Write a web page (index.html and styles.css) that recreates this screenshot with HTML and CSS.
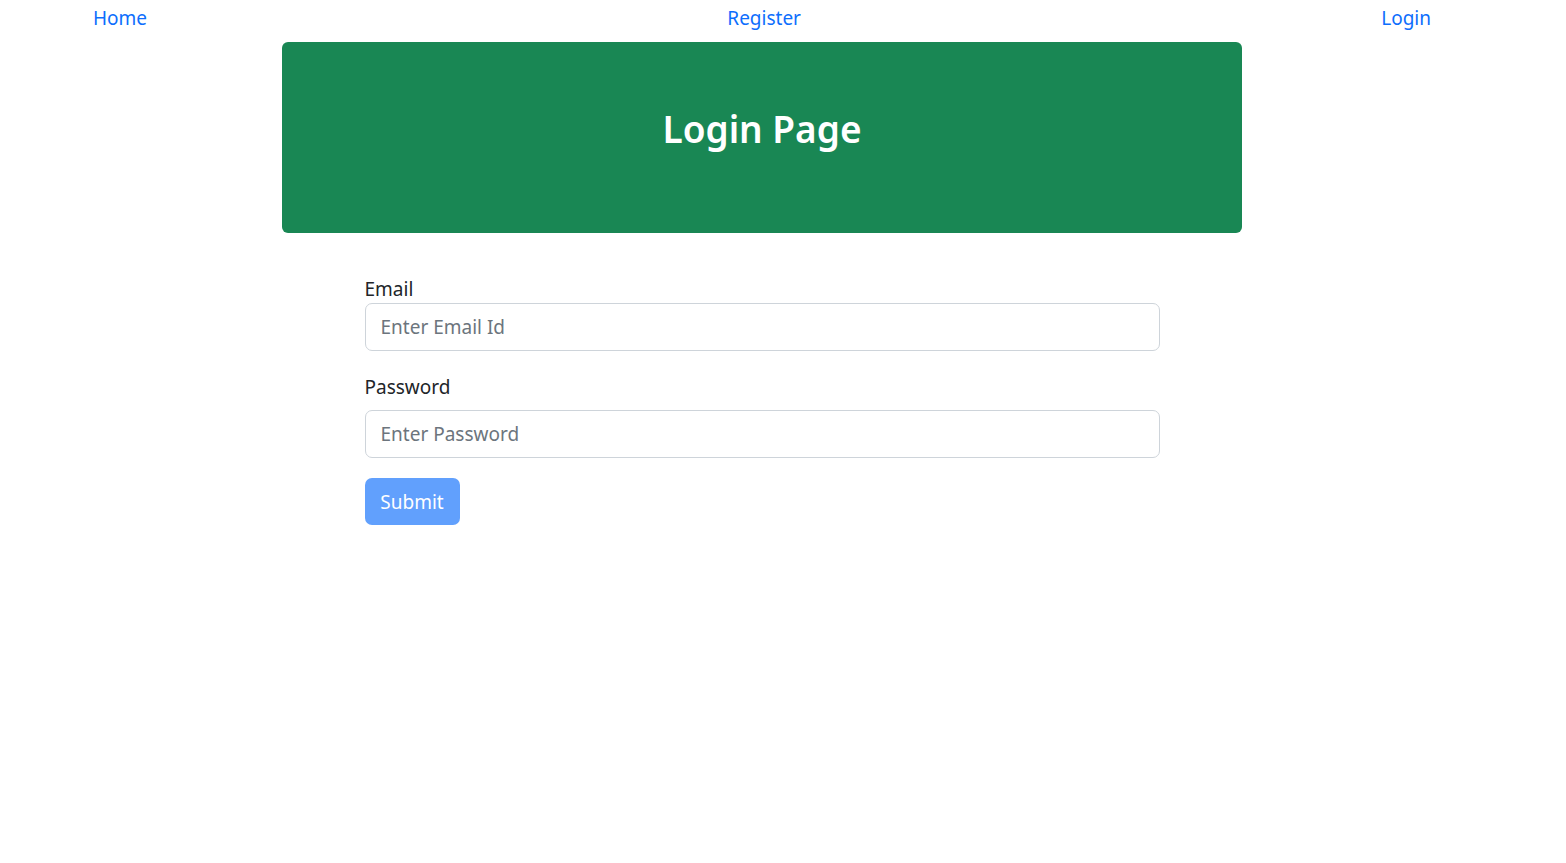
FILE: index.html
```html
<!DOCTYPE html>
<html lang="en">
<head>
    <meta charset="UTF-8">
    <meta name="viewport" content="width=device-width, initial-scale=1.0">
    <title>Login Page</title>
    <link rel="stylesheet" href="styles.css">
</head>
<body>
    <div class="page">
        <!-- top nav -->
        <nav class="top-nav">
            <a href="#" class="nav-link">Home</a>
            <a href="#" class="nav-link">Register</a>
            <a href="#" class="nav-link">Login</a>
        </nav>

        <!-- banner -->
        <div class="banner">
            <h1 class="banner-title">Login Page</h1>
        </div>

        <!-- login form -->
        <form class="login-form">
            <label class="form-label" for="email">Email</label>
            <input type="email" class="form-input" id="email" placeholder="Enter Email Id">

            <label class="form-label password-label" for="password">Password</label>
            <input type="password" class="form-input" id="password" placeholder="Enter Password">

            <button type="submit" class="submit-btn" disabled>Submit</button>
        </form>
    </div>
</body>
</html>
```

FILE: styles.css
```css
* {
    margin: 0;
    padding: 0;
    box-sizing: border-box;
}

body {
    font-family: "Noto Sans", "Open Sans", sans-serif;
    color: #212529;
    background: #fff;
}

.page {
    width: 1524px;
}

.top-nav {
    height: 36px;
    padding: 0 93px;
    display: flex;
    align-items: center;
    justify-content: space-between;
}

.nav-link {
    color: #0d6efd;
    font-size: 19px;
    text-decoration: none;
}

.banner {
    width: 960px;
    height: 191px;
    margin: 6px auto 0;
    padding-top: 63px;
    background: #198754;
    border-radius: 6px;
    text-align: center;
}

.banner-title {
    color: #fff;
    font-size: 37px;
    font-weight: 600;
    line-height: 48px;
}

.login-form {
    width: 795px;
    margin: 42px auto 0;
    display: flex;
    flex-direction: column;
    align-items: flex-start;
}

.form-label {
    font-size: 19px;
    line-height: 28px;
}

.password-label {
    margin-top: 22px;
    margin-bottom: 9px;
}

.form-input {
    width: 100%;
    height: 48px;
    padding: 0 15px;
    border: 1px solid #ced4da;
    border-radius: 7px;
    font-family: inherit;
    font-size: 19px;
    color: #212529;
    outline: none;
}

.form-input::placeholder {
    color: #6c757d;
}

.submit-btn {
    margin-top: 20px;
    width: 95px;
    height: 47px;
    border: none;
    border-radius: 7px;
    background: #0d6efd;
    opacity: 0.65;
    color: #fff;
    font-family: inherit;
    font-size: 19px;
}
```
